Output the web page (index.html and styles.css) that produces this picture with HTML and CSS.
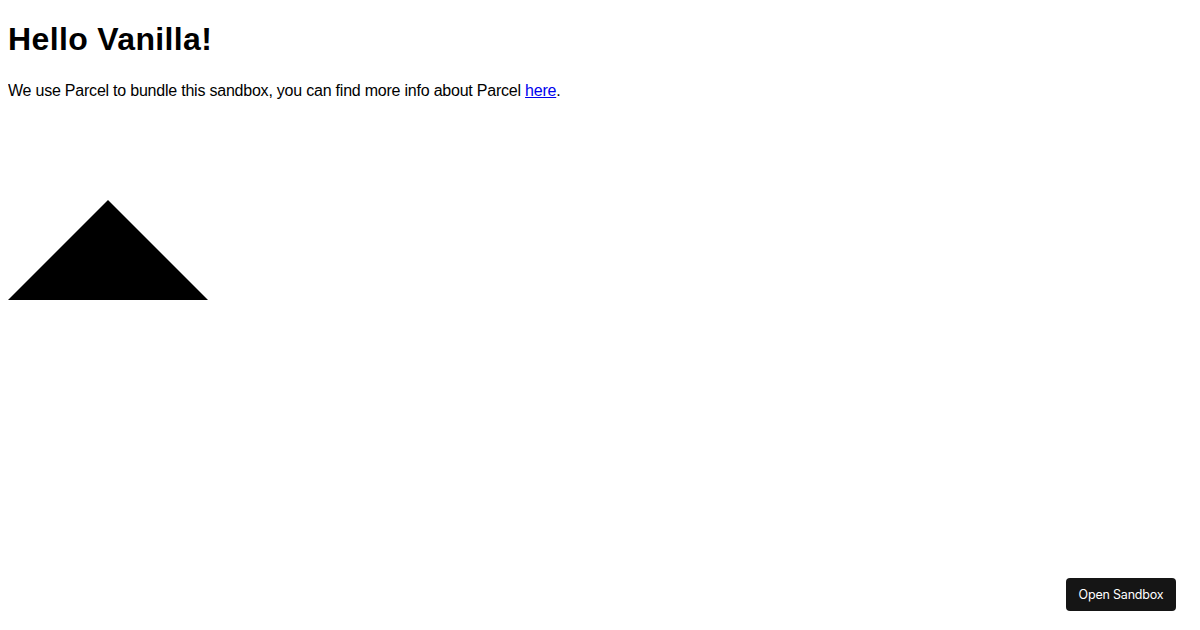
FILE: index.html
```html
<!DOCTYPE html>
<html>
<head>
<meta charset="utf-8">
<link rel="stylesheet" href="styles.css">
</head>
<body>
<div class="app">
  <h1 class="title">Hello Vanilla!</h1>
  <div class="intro">
    We use Parcel to bundle this sandbox, you can find more info about Parcel
    <a class="link" href="#">here</a>.
  </div>
  <div class="triangle"></div>
</div>
<a class="open-sandbox" href="#">Open Sandbox</a>
</body>
</html>
```

FILE: styles.css
```css
html, body {
  margin: 0;
  padding: 0;
  background: #fff;
}
body {
  margin: 8px;
  font-family: "Liberation Sans", Arial, sans-serif;
  color: #000;
}
.title {
  font-size: 32px;
  font-weight: bold;
  margin: 13px 0 0;
  line-height: 37px;
  letter-spacing: 0.36px;
}
.intro {
  font-size: 16px;
  line-height: 18px;
  margin-top: 24px;
  letter-spacing: -0.22px;
}
.link {
  color: #0000ee;
  text-decoration: underline;
}
.triangle {
  width: 0;
  height: 0;
  margin-top: 100px;
  border-left: 100px solid transparent;
  border-right: 100px solid transparent;
  border-bottom: 100px solid #000;
}
.open-sandbox {
  position: fixed;
  right: 24px;
  bottom: 19px;
  width: 110px;
  height: 33px;
  box-sizing: border-box;
  display: flex;
  align-items: center;
  justify-content: center;
  background: #151515;
  color: #fff;
  border-radius: 4px;
  font-family: Inter, "Liberation Sans", sans-serif;
  font-size: 12.5px;
  letter-spacing: -0.2px;
  text-decoration: none;
}
```
